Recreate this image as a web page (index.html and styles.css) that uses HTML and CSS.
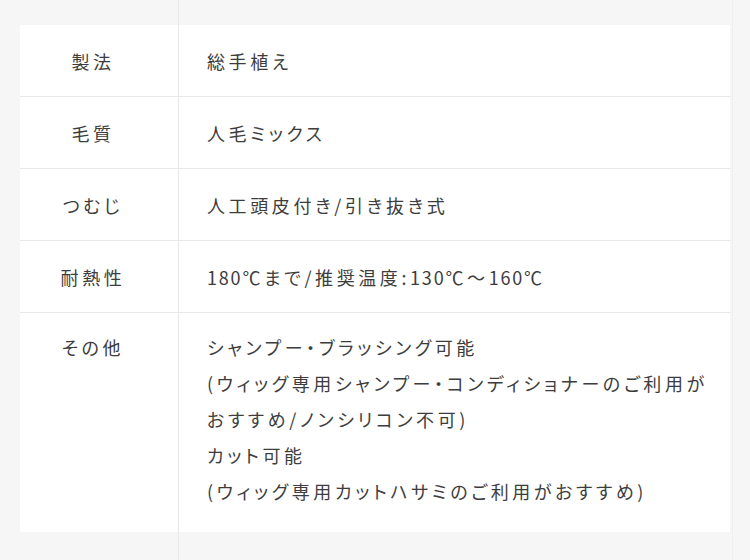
FILE: index.html
```html
<!DOCTYPE html>
<html lang="ja">
<head>
<meta charset="utf-8">
<title>商品仕様</title>
<link rel="stylesheet" href="styles.css">
</head>
<body>
<div class="spec">
  <div class="row">
    <div class="label">製法</div>
    <div class="value">総手植え</div>
  </div>
  <div class="row">
    <div class="label">毛質</div>
    <div class="value">人毛ミックス</div>
  </div>
  <div class="row">
    <div class="label">つむじ</div>
    <div class="value">人工頭皮付き/引き抜き式</div>
  </div>
  <div class="row">
    <div class="label">耐熱性</div>
    <div class="value"><span class="num">180</span>℃まで/推奨温度:<span class="num">130</span>℃〜<span class="num">160</span>℃</div>
  </div>
  <div class="row row-last">
    <div class="label">その他</div>
    <div class="value">シャンプー・ブラッシング可能<br>(ウィッグ専用シャンプー・コンディショナーのご利用がおすすめ/ノンシリコン不可)<br>カット可能<br>(ウィッグ専用カットハサミのご利用がおすすめ)</div>
  </div>
</div>
</body>
</html>
```

FILE: styles.css
```css
html, body {
  margin: 0;
  padding: 0;
}

body {
  width: 750px;
  min-height: 560px;
  background-color: #f6f6f6;
  background-image:
    linear-gradient(to right, transparent 178px, #e9e9e9 178px, #e9e9e9 179px, transparent 179px),
    linear-gradient(to right, transparent 732px, #efefef 732px, #efefef 733px, transparent 733px);
  font-family: "Noto Sans CJK JP", "Noto Sans", sans-serif;
  color: #3d3d3d;
  padding-top: 25px;
  box-sizing: border-box;
}

.spec {
  margin: 0 20px;
  width: 710px;
  background: #ffffff;
}

.row {
  display: grid;
  grid-template-columns: 159px 1fr;
  border-bottom: 1px solid #e8e8e8;
}

.row-last {
  border-bottom: none;
}

.label,
.value {
  font-size: 18px;
  line-height: 36px;
  letter-spacing: 0.2em;
  font-feature-settings: "palt";
  padding-top: 18px;
  padding-bottom: 17px;
}

.num {
  letter-spacing: 0.1em;
}

.label {
  border-right: 1px solid #e8e8e8;
  text-align: center;
  padding-right: 12px;
}

.value {
  padding-left: 28px;
  padding-right: 14px;
}

.row-last .label,
.row-last .value {
  padding-top: 16px;
  padding-bottom: 23px;
}
```
